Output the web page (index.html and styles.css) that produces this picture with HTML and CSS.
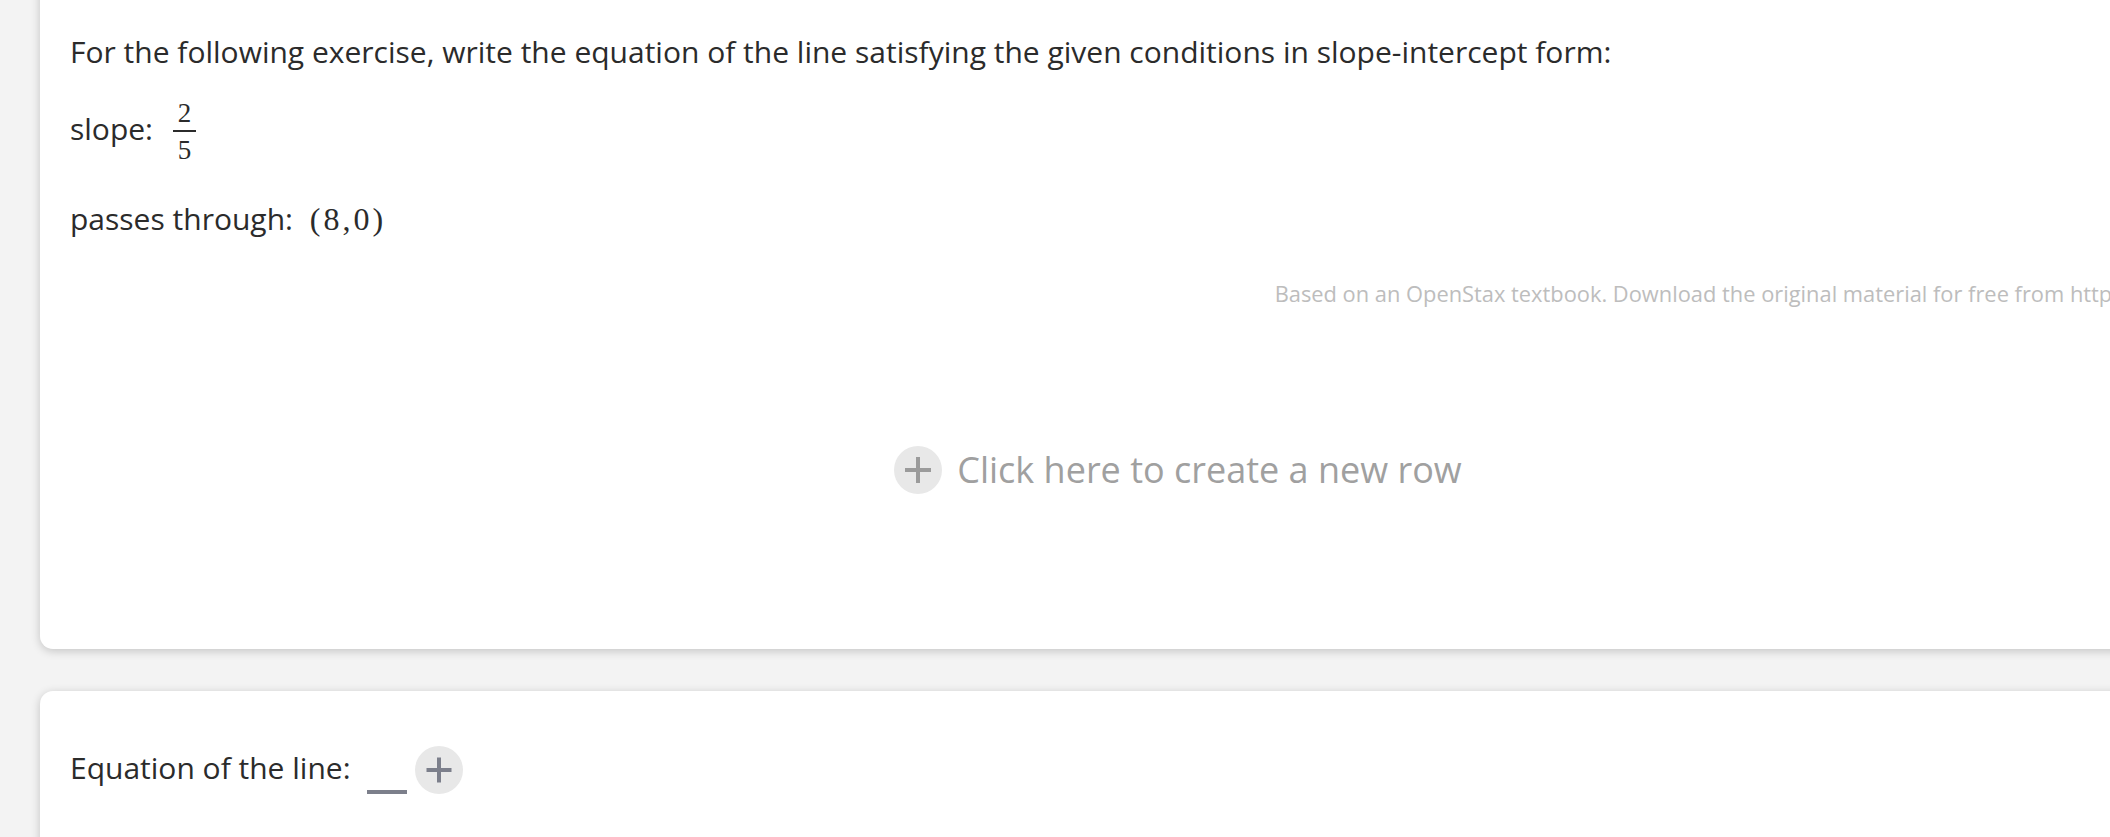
FILE: index.html
```html
<!DOCTYPE html>
<html lang="en">
<head>
<meta charset="utf-8">
<title>Exercise</title>
<link rel="stylesheet" href="styles.css">
</head>
<body>
<main class="page">
  <section class="card card-question">
    <p class="text-line">For the following exercise, write the equation of the line satisfying the given conditions in slope-intercept form:</p>
    <p class="text-line cond-line">slope: <span class="frac"><span class="frac-num">2</span><span class="frac-bar"></span><span class="frac-den">5</span></span></p>
    <p class="text-line cond-line">passes through: <span class="math">(8,0)</span></p>
    <div class="attribution">Based on an OpenStax textbook. Download the original material for free from https://openstax.org/</div>
    <div class="new-row">
      <span class="add-btn add-btn-light"><svg viewBox="0 0 48 48" width="48" height="48"><path d="M11 24H37M24 11V37" stroke="#9b9b9b" stroke-width="4" fill="none"/></svg></span>
      <span class="new-row-label">Click here to create a new row</span>
    </div>
  </section>
  <section class="card card-answer">
    <p class="text-line answer-line">Equation of the line:<span class="blank"></span><span class="add-btn add-btn-dark"><svg viewBox="0 0 48 48" width="48" height="48"><path d="M11.5 24H36.5M24 11.5V36.5" stroke="#7c7f8b" stroke-width="4" fill="none"/></svg></span></p>
  </section>
</main>
</body>
</html>
```
FILE: styles.css
```css
html, body {
  margin: 0;
  padding: 0;
}
body {
  background: #f3f3f3;
  overflow: hidden;
  font-family: "Open Sans", "Liberation Sans", sans-serif;
  color: #2b2b2b;
}
.page {
  padding-left: 40px;
}
.card {
  width: 2276px;
  box-sizing: border-box;
  background: #ffffff;
  border-radius: 13px;
  box-shadow: 0 2px 10px rgba(0, 0, 0, 0.2);
  padding-left: 30px;
  padding-right: 30px;
}
.card-question {
  margin-top: -20px;
  padding-top: 50.5px;
  padding-bottom: 155px;
}
.card-answer {
  margin-top: 42px;
  padding-top: 55px;
  height: 300px;
}
.text-line {
  margin: 0;
  font-size: 30px;
  line-height: 42px;
  white-space: nowrap;
}
.cond-line {
  margin-top: 27.5px;
}
.cond-line + .cond-line {
  margin-top: 26.5px;
}
.frac {
  display: inline-flex;
  flex-direction: column;
  align-items: center;
  vertical-align: 18.4px;
  margin-left: 12px;
  padding-bottom: 8px;
  font-family: "Liberation Serif", "DejaVu Serif", serif;
  font-size: 27px;
  line-height: 27px;
}
.frac-num,
.frac-den {
  padding: 0 5px;
}
.frac-bar {
  align-self: stretch;
  height: 1.4px;
  background: #2b2b2b;
  margin: 3.3px 0 5px;
}
.math {
  font-family: "Liberation Serif", "DejaVu Serif", serif;
  font-size: 32px;
  letter-spacing: 3px;
  margin-left: 9px;
}
.attribution {
  margin-top: 39.3px;
  text-align: right;
  font-size: 21.85px;
  line-height: 30px;
  color: #bdbdbd;
  white-space: nowrap;
}
.new-row {
  margin-top: 136.5px;
  display: flex;
  justify-content: center;
  align-items: center;
  gap: 15px;
}
.new-row-label {
  font-size: 36px;
  line-height: 48px;
  color: #a0a0a0;
}
.add-btn {
  display: inline-block;
  width: 48px;
  height: 48px;
  border-radius: 50%;
  overflow: hidden;
}
.add-btn svg {
  display: block;
}
.add-btn-light {
  background: #e8e8e8;
}
.add-btn-dark {
  background: #e8e8e8;
  vertical-align: -15px;
  margin-left: 8px;
}
.blank {
  display: inline-block;
  width: 40px;
  height: 4px;
  background: #7c7f8b;
  vertical-align: -15px;
  margin-left: 16px;
}
```
